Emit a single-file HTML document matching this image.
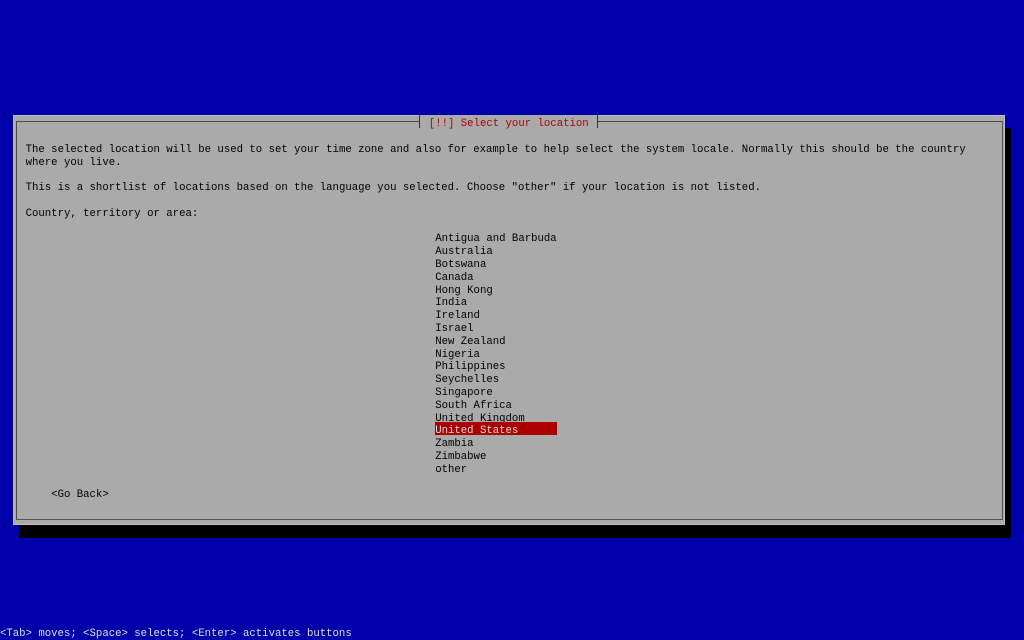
<!DOCTYPE html>
<html style="height:640px;overflow:hidden"><head><style>
html,body{overflow:hidden;height:640px}
body{margin:0;width:1024px;background:#0000aa;position:relative;font-family:"Liberation Mono",monospace;font-size:10.667px;line-height:18px}
.t{position:absolute;white-space:pre;height:12.8px;color:#000;overflow:visible}
</style></head><body>
<div style="position:absolute;left:1004.8px;top:128px;width:6.4px;height:409.6px;background:#000"></div>
<div style="position:absolute;left:19.2px;top:524.8px;width:992px;height:12.8px;background:#000"></div>
<div style="position:absolute;left:12.8px;top:115.2px;width:992px;height:409.6px;background:#aaa;box-shadow:inset 0 0 0 1px #bdbdbd"></div>
<div style="position:absolute;left:16px;top:121px;width:985px;height:397px;border:1px solid #4a4a4a;border-right-color:#555;border-bottom-color:#555"></div>
<div style="position:absolute;left:419px;top:115.2px;width:179px;height:12.8px;background:#aaa"></div>
<div style="position:absolute;left:419px;top:115.2px;width:1px;height:12.8px;background:#333"></div>
<div style="position:absolute;left:597px;top:115.2px;width:1px;height:12.8px;background:#333"></div>
<div class="t" style="left:428.8px;top:115.2px;color:#b00000">[!!] Select your location</div>
<div class="t" style="left:25.6px;top:140.8px">The selected location will be used to set your time zone and also for example to help select the system locale. Normally this should be the country</div>
<div class="t" style="left:25.6px;top:153.6px">where you live.</div>
<div class="t" style="left:25.6px;top:179.2px">This is a shortlist of locations based on the language you selected. Choose "other" if your location is not listed.</div>
<div class="t" style="left:25.6px;top:204.8px">Country, territory or area:</div>
<div class="t" style="left:435.2px;top:230.4px">Antigua and Barbuda</div>
<div class="t" style="left:435.2px;top:243.2px">Australia</div>
<div class="t" style="left:435.2px;top:256px">Botswana</div>
<div class="t" style="left:435.2px;top:268.8px">Canada</div>
<div class="t" style="left:435.2px;top:281.6px">Hong Kong</div>
<div class="t" style="left:435.2px;top:294.4px">India</div>
<div class="t" style="left:435.2px;top:307.2px">Ireland</div>
<div class="t" style="left:435.2px;top:320px">Israel</div>
<div class="t" style="left:435.2px;top:332.8px">New Zealand</div>
<div class="t" style="left:435.2px;top:345.6px">Nigeria</div>
<div class="t" style="left:435.2px;top:358.4px">Philippines</div>
<div class="t" style="left:435.2px;top:371.2px">Seychelles</div>
<div class="t" style="left:435.2px;top:384px">Singapore</div>
<div class="t" style="left:435.2px;top:396.8px">South Africa</div>
<div class="t" style="left:435.2px;top:409.6px">United Kingdom</div>
<div style="position:absolute;left:435.2px;top:422.4px;width:121.6px;height:12.8px;background:#aa0000"></div>
<div class="t" style="left:435.2px;top:422.4px;color:#ddd">United States</div>
<div class="t" style="left:435.2px;top:435.2px">Zambia</div>
<div class="t" style="left:435.2px;top:448px">Zimbabwe</div>
<div class="t" style="left:435.2px;top:460.8px">other</div>
<div class="t" style="left:51.2px;top:486.4px">&lt;Go Back&gt;</div>
<div class="t" style="left:0;top:627.2px;line-height:12.8px;padding-top:1px;box-sizing:border-box;color:#ddd">&lt;Tab&gt; moves; &lt;Space&gt; selects; &lt;Enter&gt; activates buttons</div>
</body></html>
